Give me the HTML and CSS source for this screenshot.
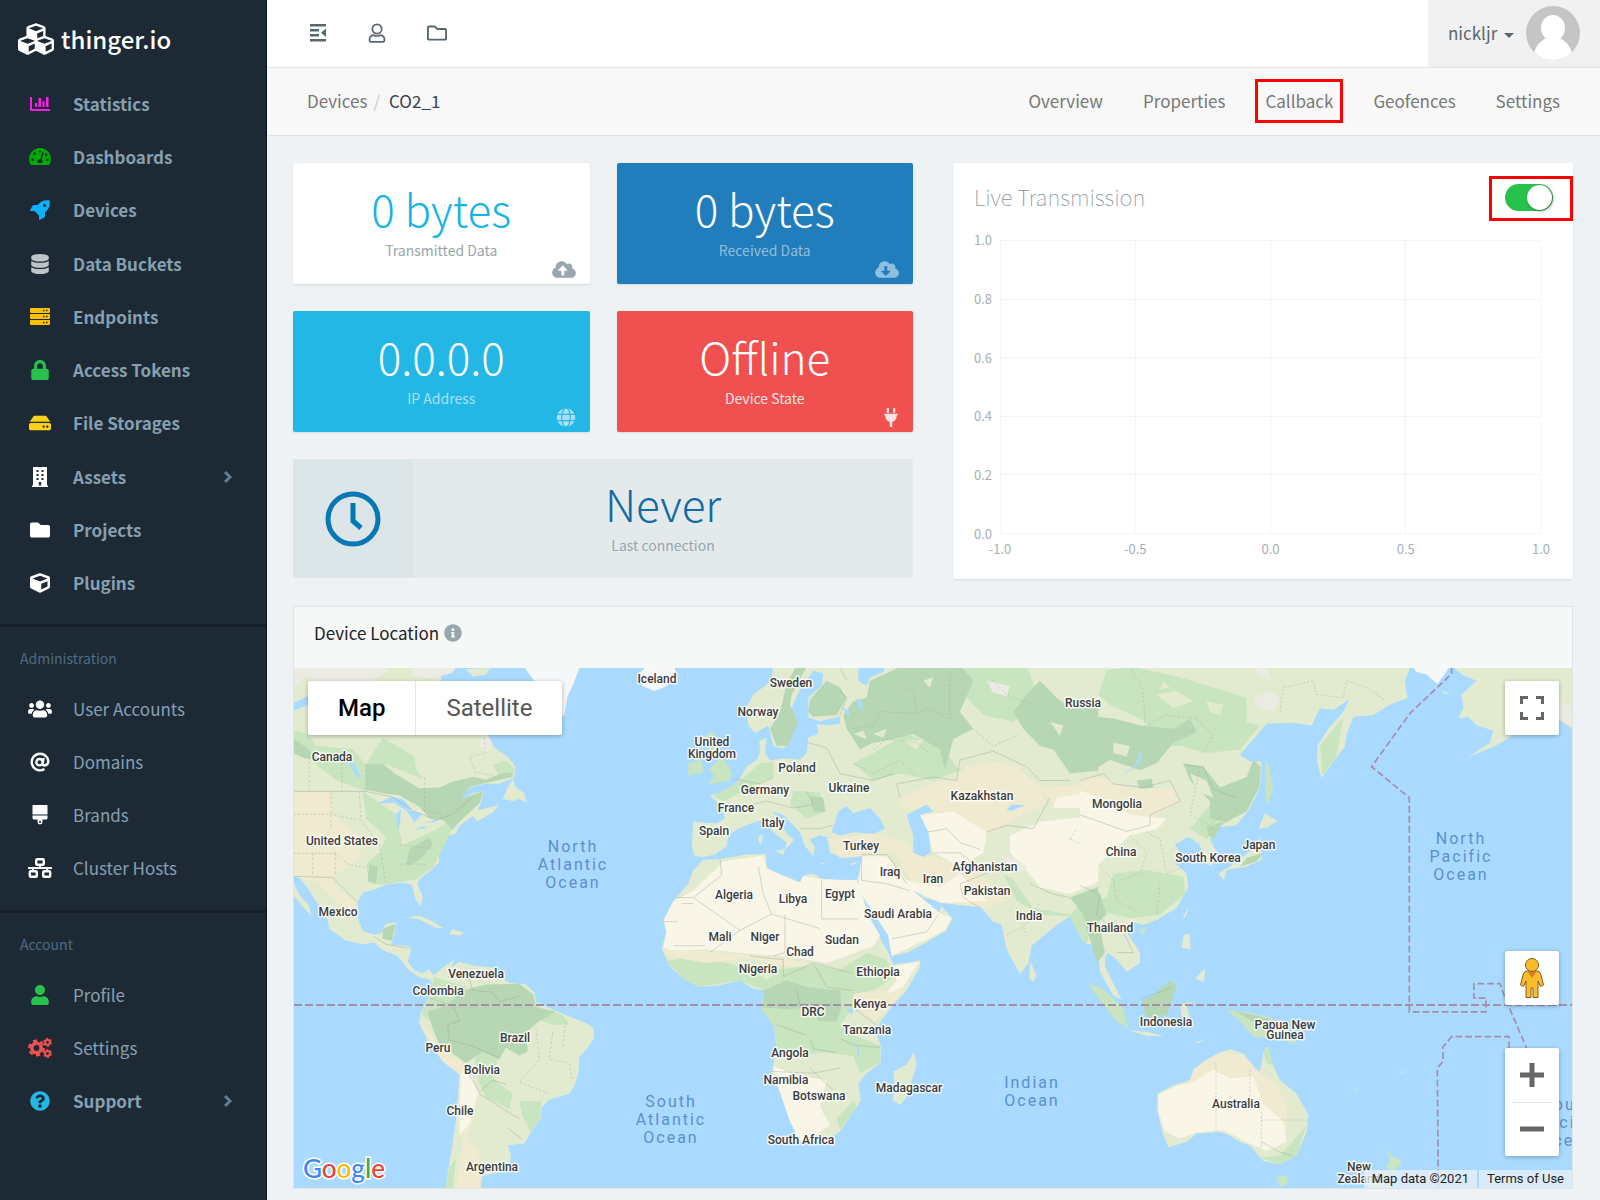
FILE: index.html
```html
<!DOCTYPE html>
<html lang="en">
<head>
    <meta charset="UTF-8">
    <meta name="viewport" content="width=device-width, initial-scale=1.0">
    <title>thinger.io - CO2_1</title>
    <link rel="stylesheet" href="styles.css">
</head>
<body>
    <div class="app">
        <aside class="sidebar">
            <a class="brand" href="#">
                <svg class="brand-icon" viewBox="0 0 512 512"><path d="M488.6 250.2L392 214V105.5c0-15-9.3-28.4-23.4-33.7l-100-37.5c-8.1-3.1-17.1-3.1-25.3 0l-100 37.5c-14.1 5.3-23.4 18.7-23.4 33.7V214l-96.6 36.2C9.3 255.5 0 268.9 0 283.9V394c0 13.6 7.7 26.1 19.9 32.2l100 50c10.1 5.1 22.1 5.1 32.2 0l103.9-52 103.9 52c10.1 5.1 22.1 5.1 32.2 0l100-50c12.2-6.1 19.9-18.6 19.9-32.2V283.9c0-15-9.3-28.4-23.4-33.7zM358 214.8l-85 31.9v-68.2l85-37v73.3zM154 104.1l102-38.2 102 38.2v.6l-102 41.4-102-41.4v-.6zm84 291.1l-85 42.5v-79.1l85-38.8v75.4zm0-112l-102 41.4-102-41.4v-.6l102-38.2 102 38.2v.6zm240 112l-85 42.5v-79.1l85-38.8v75.4zm0-112l-102 41.4-102-41.4v-.6l102-38.2 102 38.2v.6z"/></svg>
                <span>thinger.io</span>
            </a>

            <nav class="menu menu-main">
                <a class="strong" href="#">
                    <svg class="icon magenta" viewBox="0 0 20 20"><path d="M0 3h2v12h18v2H1.5Q0 17 0 15.5zM5 9h2v4H5zM8.5 4h2.5v9H8.500zM12.500 7h2v6h-2zM16 3h2.5v10H16z"/></svg>
                    Statistics
                </a>
                <a class="strong" href="#">
                    <svg class="icon wide green-dark" viewBox="0 0 22 20"><path fill-rule="evenodd" d="M11 1a11 11 0 0 0-9.5 16.5q.5.5 1.200.5h16.600q.7 0 1.200-.5A11 11 0 0 0 11 1zM11 3.200a1.200 1.200 0 1 1 0 2.400 1.200 1.200 0 0 1 0-2.400zM5.500 5.500a1.200 1.200 0 1 1 0 2.400 1.200 1.200 0 0 1 0-2.400zM3.600 11.500a1.200 1.200 0 1 1 0 2.400 1.200 1.200 0 0 1 0-2.400zM18.400 11.500a1.200 1.200 0 1 1 0 2.400 1.200 1.200 0 0 1 0-2.400zM17.200 6.500a1.200 1.200 0 1 1 0 2.400 1.200 1.200 0 0 1 0-2.400zM13.600 5l1.300.4-2.200 7.100a2.500 2.500 0 0 1 .3 3.500H9a2.500 2.500 0 0 1 2.400-4z"/></svg>
                    Dashboards
                </a>
                <a class="strong" href="#">
                    <svg class="icon blue" viewBox="0 0 20 20"><path fill-rule="evenodd" d="M19.600.5C14.500-.6 10.700 1.400 7.600 5H4Q3 5 2.500 5.800L.2 10q-.4 1 .8 1h3.500L9 15.500V19q.1 1.200 1 .7l4.200-2.200q.8-.5.8-1.500v-3.600c3.600-3.100 5.600-6.900 4.600-11.900zM14.600 3.800a1.600 1.600 0 1 1 0 3.200 1.600 1.600 0 0 1 0-3.200z"/></svg>
                    Devices
                </a>
                <a class="strong" href="#">
                    <svg class="icon silver" viewBox="0 0 448 512"><path d="M448 73.143v45.714C448 159.143 347.667 192 224 192S0 159.143 0 118.857V73.143C0 32.857 100.333 0 224 0s224 32.857 224 73.143zM448 176v102.857C448 319.143 347.667 352 224 352S0 319.143 0 278.857V176c48.125 33.143 136.208 48.572 224 48.572S399.874 209.143 448 176zm0 160v102.857C448 479.143 347.667 512 224 512S0 479.143 0 438.857V336c48.125 33.143 136.208 48.572 224 48.572S399.874 369.143 448 336z"/></svg>
                    Data Buckets
                </a>
                <a class="strong" href="#">
                    <svg class="icon amber" viewBox="0 0 20 20"><rect y="1" width="20" height="5" rx="1"/><rect y="7" width="20" height="5" rx="1"/><rect y="13" width="20" height="5" rx="1"/><path stroke="#1d2a35" stroke-width="1.5" stroke-dasharray="1.500 1.500" d="M13 3.500h5M13 9.500h5M13 15.500h5"/></svg>
                    Endpoints
                </a>
                <a class="strong" href="#">
                    <svg class="icon green" viewBox="0 0 448 512"><path d="M400 224h-24v-72C376 68.200 307.800 0 224 0S72 68.200 72 152v72H48c-26.500 0-48 21.500-48 48v192c0 26.500 21.500 48 48 48h352c26.500 0 48-21.500 48-48V272c0-26.500-21.500-48-48-48zm-104 0H152v-72c0-39.700 32.300-72 72-72s72 32.300 72 72v72z"/></svg>
                    Access Tokens
                </a>
                <a class="strong" href="#">
                    <svg class="icon wide yellow" viewBox="0 0 576 512"><path d="M576 304v96c0 26.510-21.490 48-48 48H48c-26.510 0-48-21.490-48-48v-96c0-26.510 21.490-48 48-48h480c26.510 0 48 21.490 48 48zm-48-80a79.557 79.557 0 0 1 30.777 6.165L462.250 85.374A48.003 48.003 0 0 0 422.311 64H153.689a48 48 0 0 0-39.938 21.374L17.223 230.165A79.557 79.557 0 0 1 48 224h480z"/><g fill="#1d2a35"><circle cx="384" cy="352" r="30"/><circle cx="480" cy="352" r="30"/></g></svg>
                    File Storages
                </a>
                <a class="strong" href="#">
                    <svg class="icon white" viewBox="0 0 18 20"><path fill-rule="evenodd" d="M2 0h14v18.500h1V20H1v-1.500h1zM5.500 3v2h2V3zm5 0v2h2V3zm-5 4v2h2V7zm5 0v2h2V7zm-5 4v2h2v-2zm5 0v2h2v-2zM7.800 15v3.500h2.400V15z"/></svg>
                    Assets
                    <svg class="arrow" viewBox="0 0 10 14"><path d="M2 2l5 5-5 5"/></svg>
                </a>
                <a class="strong" href="#">
                    <svg class="icon white" viewBox="0 0 512 512"><path d="M464 128H272l-64-64H48C21.490 64 0 85.490 0 112v288c0 26.510 21.490 48 48 48h416c26.510 0 48-21.490 48-48V176c0-26.510-21.490-48-48-48z"/></svg>
                    Projects
                </a>
                <a class="strong" href="#">
                    <svg class="icon white" viewBox="0 0 512 512"><path d="M239.100 6.300l-208 78c-18.700 7-31.100 25-31.100 45v225.100c0 18.200 10.300 34.800 26.500 42.900l208 104c13.500 6.800 29.400 6.800 42.900 0l208-104c16.300-8.100 26.500-24.800 26.500-42.900V129.300c0-20-12.400-37.900-31.100-44.900l-208-78C262 2.200 250 2.200 239.100 6.300zM256 68.400l192 72v1.100l-192 78-192-78v-1.100l192-72zm32 356V275.500l160-65v133.900l-160 80z"/></svg>
                    Plugins
                </a>
            </nav>

            <h2 class="menu-title">Administration</h2>
            <nav class="menu menu-admin">
                <a href="#">
                    <svg class="icon wider white" viewBox="0 0 640 512"><path d="M96 224c35.300 0 64-28.700 64-64s-28.700-64-64-64-64 28.700-64 64 28.700 64 64 64zm448 0c35.300 0 64-28.700 64-64s-28.700-64-64-64-64 28.700-64 64 28.700 64 64 64zm32 32h-64c-17.600 0-33.500 7.100-45.100 18.600 40.300 22.100 68.900 62 75.100 109.400h66c17.700 0 32-14.300 32-32v-32c0-35.300-28.700-64-64-64zm-256 0c61.900 0 112-50.100 112-112S381.900 32 320 32 208 82.100 208 144s50.100 112 112 112zm76.800 32h-8.300c-20.800 10-43.900 16-68.500 16s-47.600-6-68.500-16h-8.300C179.600 288 128 339.600 128 403.200V432c0 26.500 21.500 48 48 48h288c26.500 0 48-21.500 48-48v-28.800c0-63.600-51.600-115.200-115.200-115.200zm-223.700-13.400C161.500 263.100 145.600 256 128 256H64c-35.300 0-64 28.700-64 64v32c0 17.700 14.300 32 32 32h65.900c6.300-47.400 34.900-87.300 75.200-109.400z"/></svg>
                    User Accounts
                </a>
                <a href="#">
                    <svg class="icon white" viewBox="0 0 20 20"><g fill="none" stroke="#fff" stroke-width="2.400"><circle cx="9.500" cy="10.200" r="3.200"/><path d="M13.600 6l-.9 5.500q-.2 2 1.700 2 3.900-.4 3.900-4.500A8.300 7.900 0 0 0 10 1.700 8.300 8.300 0 1 0 14.500 17"/></g></svg>
                    Domains
                </a>
                <a href="#">
                    <svg class="icon white" viewBox="0 0 18 20"><path fill-rule="evenodd" d="M1.500 0h15v9.500h-15zM1.500 10.500h15V13q0 1.500-1.500 1.500h-3.500V17a2.500 2.500 0 0 1-5 0v-2.500H3q-1.500 0-1.500-1.500zM9 16a1 1 0 1 0 .1 0z"/></svg>
                    Brands
                </a>
                <a href="#">
                    <svg class="icon wider white" viewBox="0 0 24 20"><path d="M0 9h24v2H0zM11 7h2v4h-2zM4 10h2v4H4zM18 10h2v4h-2z"/><g fill="none" stroke="#fff" stroke-width="2.400"><rect x="8.200" y="1.200" width="7.600" height="5.600" rx="1"/><rect x="1.800" y="13.200" width="7" height="5.600" rx="1"/><rect x="15.200" y="13.200" width="7" height="5.600" rx="1"/></g></svg>
                    Cluster Hosts
                </a>
            </nav>

            <h2 class="menu-title">Account</h2>
            <nav class="menu menu-account">
                <a href="#">
                    <svg class="icon green" viewBox="0 0 448 512"><path d="M224 256c70.700 0 128-57.300 128-128S294.700 0 224 0 96 57.300 96 128s57.300 128 128 128zm89.600 32h-16.700c-22.200 10.200-46.900 16-72.900 16s-50.600-5.800-72.900-16h-16.700C60.200 288 0 348.200 0 422.400V464c0 26.500 21.500 48 48 48h352c26.500 0 48-21.500 48-48v-41.600c0-74.200-60.200-134.400-134.400-134.400z"/></svg>
                    Profile
                </a>
                <a href="#">
                    <svg class="icon wider" viewBox="0 0 24 20"><g fill="none" stroke="#f05050"><circle cx="8.500" cy="10" r="4.700" stroke-width="3.500"/><circle cx="8.500" cy="10" r="7.200" stroke-width="2.600" stroke-dasharray="4.200 3.340"/><circle cx="19.500" cy="4.300" r="2.400" stroke-width="2"/><circle cx="19.500" cy="4.300" r="3.700" stroke-width="1.400" stroke-dasharray="2.200 1.670"/><circle cx="19.500" cy="15.500" r="2.400" stroke-width="2"/><circle cx="19.500" cy="15.500" r="3.700" stroke-width="1.400" stroke-dasharray="2.200 1.670"/></g></svg>
                    Settings
                </a>
                <a class="strong" href="#">
                    <svg class="icon cyan" viewBox="0 0 512 512"><path d="M504 256c0 136.997-111.043 248-248 248S8 392.997 8 256C8 119.083 119.043 8 256 8s248 111.083 248 248zM262.655 90c-54.497 0-89.255 22.957-116.549 63.758-3.536 5.286-2.353 12.415 2.715 16.258l34.699 26.310c5.205 3.947 12.621 3.008 16.665-2.122 17.864-22.658 30.113-35.797 57.303-35.797 20.429 0 45.698 13.148 45.698 32.958 0 14.976-12.363 22.667-32.534 33.976C247.128 238.528 216 254.941 216 296v4c0 6.627 5.373 12 12 12h56c6.627 0 12-5.373 12-12v-1.333c0-28.462 83.186-29.647 83.186-106.667 0-58.002-60.165-102-116.531-102zM256 338c-25.365 0-46 20.635-46 46 0 25.364 20.635 46 46 46s46-20.636 46-46c0-25.365-20.635-46-46-46z"/></svg>
                    Support
                    <svg class="arrow" viewBox="0 0 10 14"><path d="M2 2l5 5-5 5"/></svg>
                </a>
            </nav>
        </aside>

        <div class="page">
            <header class="topbar">
                <div class="tools">
                    <button type="button" aria-label="Toggle menu">
                        <svg width="18" height="18" viewBox="0 0 18 18"><path d="M1 0h16v2.500H1zM1 5h9v2.500H1zM1 10h9v2.500H1zM1 15h16v2.500H1zM17 4.500v8.500l-5-4.200z"/></svg>
                    </button>
                    <button type="button" aria-label="Account">
                        <svg width="22" height="20" viewBox="-2 0 22 20"><g fill="none" stroke="#58666e" stroke-width="1.700"><circle cx="9" cy="6" r="4.700"/><path d="M5.500 12.200q3.500 1.600 7 0 4 .6 4 4.500 0 2.200-1.500 2.200H3q-1.500 0-1.500-2.200 0-3.900 4-4.500z"/></g></svg>
                    </button>
                    <button type="button" aria-label="Projects">
                        <svg width="20" height="20" viewBox="0 0 512 512"><path d="M464 128H272l-54.630-54.630c-6-6-14.140-9.370-22.630-9.370H48C21.490 64 0 85.490 0 112v288c0 26.510 21.490 48 48 48h416c26.510 0 48-21.490 48-48V176c0-26.510-21.490-48-48-48zm0 272H48V112h140.120l54.630 54.630c6 6 14.140 9.370 22.630 9.370H464v224z"/></svg>
                    </button>
                </div>
                <button class="user" type="button">
                    nickljr <span class="caret"></span>
                    <svg class="avatar" viewBox="0 0 54 54"><clipPath id="round"><circle cx="27" cy="27" r="27"/></clipPath><g clip-path="url(#round)"><path fill="#c5c5c5" d="M0 0h54v54H0z"/><ellipse cx="27" cy="22" rx="12" ry="13" fill="#fff"/><path fill="#fff" d="M8 47q3-11 12.500-15h13Q43 36 46 47v8H8z"/></g></svg>
                </button>
            </header>

            <div class="subbar">
                <div class="crumbs"><a href="#">Devices</a><span class="slash">/</span><span class="current">CO2_1</span></div>
                <nav class="tabs">
                    <a href="#">Overview</a>
                    <a href="#">Properties</a>
                    <a class="marked" href="#">Callback</a>
                    <a href="#">Geofences</a>
                    <a href="#">Settings</a>
                </nav>
            </div>

            <main class="content">
                <div class="columns">
                    <div class="widgets">
                        <div class="widget">
                            <div class="value cyan-text">0 bytes</div>
                            <div class="caption">Transmitted Data</div>
                            <svg class="corner" viewBox="0 0 640 512"><path d="M537.600 226.600c4.100-10.700 6.400-22.400 6.400-34.600 0-53-43-96-96-96-19.700 0-38.100 6-53.300 16.200C367 64.200 315.300 32 256 32c-88.400 0-160 71.600-160 160 0 2.700.1 5.400.2 8.100C40.200 219.800 0 273.200 0 336c0 79.500 64.500 144 144 144h368c70.700 0 128-57.300 128-128 0-61.900-44-113.600-102.400-125.400zM393.400 288H328v112c0 8.800-7.200 16-16 16h-48c-8.800 0-16-7.200-16-16V288h-65.400c-14.300 0-21.400-17.200-11.300-27.300l105.400-105.400c6.200-6.200 16.400-6.200 22.600 0l105.400 105.400c10.100 10.100 2.900 27.300-11.300 27.300z"/></svg>
                        </div>
                        <div class="widget received">
                            <div class="value">0 bytes</div>
                            <div class="caption">Received Data</div>
                            <svg class="corner" viewBox="0 0 640 512"><path d="M537.600 226.600c4.100-10.700 6.400-22.400 6.400-34.600 0-53-43-96-96-96-19.700 0-38.100 6-53.300 16.200C367 64.200 315.300 32 256 32c-88.400 0-160 71.600-160 160 0 2.700.1 5.400.2 8.100C40.200 219.800 0 273.200 0 336c0 79.500 64.500 144 144 144h368c70.700 0 128-57.300 128-128 0-61.900-44-113.600-102.400-125.400zm-132.900 88.700L299.300 420.700c-6.200 6.200-16.400 6.200-22.600 0L171.300 315.300c-10.100-10.100-2.900-27.300 11.300-27.300H248V176c0-8.800 7.200-16 16-16h48c8.800 0 16 7.200 16 16v112h65.400c14.200 0 21.400 17.200 11.300 27.300z"/></svg>
                        </div>
                        <div class="widget address">
                            <div class="value">0.0.0.0</div>
                            <div class="caption">IP Address</div>
                            <svg class="corner narrow" viewBox="0 0 20 20"><circle cx="10" cy="10" r="9.800"/><g fill="none" stroke="#23b7e5" stroke-width="1.200"><ellipse cx="10" cy="10" rx="4.500" ry="10"/><path d="M0 6.700h20M0 13.300h20"/></g></svg>
                        </div>
                        <div class="widget state">
                            <div class="value">Offline</div>
                            <div class="caption">Device State</div>
                            <svg class="corner slim" viewBox="0 0 16 20"><path d="M3.500 1a1.200 1.200 0 0 1 2.400 0v4H3.500zM10.100 1a1.200 1.200 0 0 1 2.400 0v4h-2.400zM1 6h14v2h-1q0 5.500-4.700 6.700V20H6.700v-5.300Q2 13.500 2 8H1z"/></svg>
                        </div>
                        <div class="widget last">
                            <div class="clock">
                                <svg viewBox="0 0 56 56"><circle cx="28" cy="28" r="25"/><path d="M28 12v18l8 7"/></svg>
                            </div>
                            <div class="last-text">
                                <div class="value">Never</div>
                                <div class="caption">Last connection</div>
                            </div>
                        </div>
                    </div>

                    <section class="live">
                        <div class="live-head">
                            <h3 id="live-title">Live Transmission</h3>
                            <label class="switch"><input type="checkbox" checked aria-labelledby="live-title"></label>
                        </div>
                        <div class="chart">
                            <div class="y-axis">
                                <span>1.0</span><span>0.8</span><span>0.6</span><span>0.4</span><span>0.2</span><span>0.0</span>
                            </div>
                            <div class="plot">
                                <i></i><i></i><i></i><i></i>
                                <i></i><i></i><i></i><i></i>
                                <i></i><i></i><i></i><i></i>
                                <i></i><i></i><i></i><i></i>
                                <i></i><i></i><i></i><i></i>
                            </div>
                            <div class="x-axis">
                                <span>-1.0</span><span>-0.5</span><span>0.0</span><span>0.5</span><span>1.0</span>
                            </div>
                        </div>
                    </section>
                </div>

                <section class="location">
                    <h3>Device Location
                        <svg class="info" viewBox="0 0 512 512"><path d="M256 8C119.043 8 8 119.083 8 256c0 136.997 111.043 248 248 248s248-111.003 248-248C504 119.083 392.957 8 256 8zm0 110c23.196 0 42 18.804 42 42s-18.804 42-42 42-42-18.804-42-42 18.804-42 42-42zm56 254c0 6.627-5.373 12-12 12h-88c-6.627 0-12-5.373-12-12v-24c0-6.627 5.373-12 12-12h12v-64h-12c-6.627 0-12-5.373-12-12v-24c0-6.627 5.373-12 12-12h64c6.627 0 12 5.373 12 12v100h12c6.627 0 12 5.373 12 12v24z"/></svg>
                    </h3>
                    <div class="map">
                        <svg class="world" viewBox="0 0 1278 520" preserveAspectRatio="xMidYMid slice">
                            <!-- Americas -->
                            <g transform="translate(-8 -68) scale(.3333 .3827)">
                                <path class="land" d="M10 160H470L450 352 445 385 420 405 425 440 415 465 390 440 385 405 300 375 270 352 450 352H605L625 385 665 410 688 435 685 465 640 480 600 480 550 490 520 525 560 505 592 500 585 530 575 550 640 535 620 555 575 578 560 565 520 590 510 610 475 620 470 650 458 660 460 685 430 710 400 730 395 745 410 775 405 800 390 785 378 745 350 738 300 745 270 755 230 765 215 790 215 830 230 865 265 875 285 870 300 845 332 842 325 875 315 900 370 905 375 915 365 945 385 968 410 975 430 965 445 985 435 992 400 985 370 968 335 930 290 915 265 895 230 900 180 890 130 860 125 835 100 800 70 760 40 725 10 720z"/>
                                <path class="land" d="M20 732L40 770 70 800 75 825 50 800 20 770zM650 520L665 490 680 468 690 490 715 505 722 530 700 520 680 525zM365 828L400 825 440 840 472 857 450 857 400 835zM490 872L500 860 535 870 520 877zM540 180L560 200 600 195 612 178z"/>
                                <path class="pale" d="M10 160H310L300 190 250 212H100L60 200 10 240zM370 160H520L500 190 440 205 380 200zM590 352H605L620 380 600 400 580 380z"/>
                                <path class="ice" d="M710 170L735 200 760 230 800 330 835 300 845 250 860 225 880 178 900 170zM1055 195L1085 172 1165 172 1172 205 1135 228 1105 238 1070 225z"/>
                                <path class="green" d="M20 340L66 350 90 380 200 390 240 430 240 500 150 470 60 410 20 400zM230 500L330 560 350 640 450 600 520 560 470 650 440 700 390 730 330 738 300 745 250 740 240 690 280 660 300 620 240 570zM290 360L340 385 385 410 390 440 410 468 360 450 300 430 240 430zM620 430L660 420 685 440 680 465 640 460z"/>
                                <path class="forest" d="M240 430L290 428 330 455 400 492 460 490 500 475 560 462 600 470 640 455 680 450 680 462 600 478 550 488 525 520 590 500 582 530 520 580 500 600 470 575 430 570 400 540 340 510 290 505 240 495zM20 360L60 385 90 410 60 415 20 400zM250 690L275 695 270 740 245 735zM370 650L430 620 440 640 400 680 360 695zM290 860L330 845 318 890 290 885z"/>
                                <path class="tan" d="M20 502H135L140 560 220 620 225 670 150 720 140 745 210 790 210 810 150 790 100 740 20 720z"/>
                                <path class="water" d="M20 270L66 250V275L20 290zM275 532L315 515 350 520 378 548 350 545 325 530zM330 560L345 548 342 585 335 602zM352 545L408 560 385 582 370 560zM380 602L415 590 420 596zM420 582L455 572 450 580zM178 412L195 415 225 460 215 465z"/>
                                <path class="land" d="M430 988L450 975 470 960 505 940 495 960 520 945 560 955 620 960 640 985 670 1000 720 1005 745 1025 750 1050 800 1070 840 1085 900 1105 922 1118 925 1145 900 1175 880 1195 878 1235 865 1270 850 1290 790 1305 768 1325 765 1355 735 1390 715 1420 665 1425 675 1450 672 1470 640 1495 590 1505 580 1545H478L488 1480 500 1420 515 1330 520 1240 470 1205 430 1160 400 1105 405 1075 430 1035 442 1010z"/>
                                <path class="green" d="M445 985L500 1000 540 1010 520 1060 430 1100 405 1080 430 1035zM560 1170L640 1180 620 1250 680 1290 670 1330 600 1300 580 1260zM750 1060L830 1085 850 1110 800 1110 740 1090zM700 1310L765 1310 768 1350 735 1390 710 1350zM490 1480L510 1460 500 1540H480z"/>
                                <path class="forest" d="M425 1075L480 1060 530 1020 600 1005 700 1003 742 1030 750 1065 810 1075 760 1100 720 1130 725 1180 700 1190 660 1170 640 1200 590 1180 540 1210 500 1185 460 1160 440 1120z"/>
                                <path class="tan" d="M402 1105L440 1140 470 1185 530 1205 545 1260 580 1280 560 1360 545 1400 580 1450 585 1540H510L530 1420 515 1340 522 1240 470 1205z"/>
                                <path class="sand" d="M525 1235L560 1245 575 1290 550 1370 520 1400z"/>
                                <path class="border" d="M25 500H240L320 515 380 550 450 575 500 560 560 515M25 722L140 725 215 790M265 880L300 900 370 910M430 1040L500 1060 520 1100 485 1110 490 1150 560 1165 635 1195M530 1210L580 1285 620 1255 660 1265M580 1290L670 1340 700 1355M665 1380L710 1410M540 960L560 1020 620 1025 640 1050 700 1035"/>
                                <path class="border dots" d="M70 410V500M168 400V500M240 430V500M416 465V550L470 560M135 502V600M25 560H135L220 575M25 662H150L185 690 240 700M80 662V722M148 662V722M220 502L225 575 280 640 300 740M340 640L440 650M330 690H420M595 360L600 400 550 410 570 450 620 460M750 1120L760 1200 700 1260 790 1290M800 1130L790 1200 850 1210 860 1260M840 1100L830 1170"/>
                            </g>
                            <!-- Europe, Africa and western Asia -->
                            <g transform="translate(346 -8) scale(.3333 .3443)">
                                <path class="land" d="M1385 10H400L395 60 340 100 320 135 325 190 345 213 385 190 400 250 430 258 450 230 475 180 455 140 475 95 520 30 550 40 545 75 505 110 505 168 540 178 600 165 600 185 560 190 530 185 535 215 505 225 500 270 480 290 430 285 390 292 375 270 380 225 358 235 360 270 350 290 320 310 300 345 280 365 250 385 208 392 240 420 255 460 230 475 160 470 155 540 165 570 190 572 225 565 260 540 265 510 295 490 345 470 370 465 400 500 440 530 435 552 462 522 440 505 420 470 400 440 430 450 480 500 495 540 520 570 525 545 510 520 540 510 562 515 570 560 610 575 665 570 660 610 650 640 650 670 690 720 745 800 755 860 800 850 860 820 920 785 938 750 905 715 895 735 850 720 815 670 810 655 850 690 905 705 1020 715 1060 760 1085 770 1100 840 1140 912 1165 880 1175 830 1250 770 1290 745 1330 820 1385 830z"/>
                                <path class="land" d="M190 580L240 578 320 565 378 563 380 605 430 625 480 645 490 625 520 620 545 635 600 640 650 638 655 665 670 700 690 750 710 790 745 850 760 885 842 873 838 895 800 960 760 1000 730 1040 705 1075 722 1120 722 1170 680 1200 655 1230 662 1280 635 1320 600 1370 560 1395 500 1400 478 1398 450 1340 425 1270 395 1200 410 1120 400 1060 365 1015 372 960 340 955 300 930 240 945 175 950 130 925 90 890 65 840 78 790 70 755 100 700 145 650 160 610z"/>
                                <path class="land" d="M822 1140L830 1175 800 1270 780 1292 758 1280 765 1240 760 1195 800 1175zM355 510L368 508 365 535 356 530zM405 555L437 550 430 566zM535 588L555 590 545 593zM630 592L652 585 640 597zM1170 875L1190 915 1180 935 1168 925z"/>
                                <path class="green" d="M190 225L220 205 225 240 265 310 278 330 265 352 205 360 225 335 205 320 235 290 200 250zM145 300L185 290 190 325 145 337zM300 350L360 300 400 295 400 340 330 370 250 410 220 395zM460 380L540 385 560 440 500 460 450 420zM700 270L800 215 900 250 960 320 880 350 780 330 700 350 640 300zM960 15H1160L1200 120 1120 180 1030 160 980 110z"/>
                                <path class="forest" d="M470 15L500 20 455 100 450 130 475 180 445 248 410 250 390 200 420 150 440 70zM560 60L600 80 620 110 590 160 520 165 505 150 510 115zM690 60L760 30 790 15H960L1000 60 960 150 1000 200 940 230 915 320 900 260 820 215 760 230 700 240 660 260 620 200 610 160 640 120 680 110zM1160 100L1200 60 1250 110 1290 140 1385 130V320L1290 330 1240 260 1200 250 1150 200 1120 150zM510 395L550 400 555 440 520 440z"/>
                                <path class="land" d="M850 60L880 50 870 80zM1010 190L1090 170 1120 210 1060 230zM700 215L740 200 730 225zM1230 180L1270 190 1260 220zM640 215L670 205 680 230zM790 235L850 230 830 260zM1180 290L1220 300 1200 320z"/>
                                <path class="tan" d="M560 520L700 505 800 530 820 560 880 570 1020 620 1100 700 1040 720 900 705 820 650 760 560 600 575zM780 400L870 360 950 340 980 310 1060 295 1130 310 1200 370 1220 420 1150 450 1060 500 1000 500 940 440 880 440 800 430 785 440zM1200 370L1385 360V440L1240 420z"/>
                                <path class="sand" d="M250 585L370 568 380 605 430 628 480 648 490 627 545 637 650 640 690 750 720 800 700 830 620 860 560 880 500 870 420 860 300 850 190 840 100 845 70 835 80 790 72 755 100 700 160 670zM665 570L740 570 800 640 900 660 960 620 1040 700 905 705 820 670 900 735 935 750 915 785 755 860 745 800 655 665zM840 450L940 440 1040 500 1030 560 960 600 880 560 865 500zM1110 510L1200 470 1385 450V640L1290 680 1200 660 1150 600 1110 560zM1250 400L1385 380V430H1240z"/>
                                <path class="green" d="M80 875L150 860 260 880 340 900 380 930 420 900 520 885 600 900 680 850 740 870 760 920 700 960 640 970 640 1010 600 1060 640 1090 720 1120 720 1170 660 1200 640 1150 560 1140 400 1150 410 1110 400 1060 365 1015 372 960 300 930 175 950 130 925zM590 1330L640 1280 650 1300 600 1365zM1090 620L1120 640 1180 720 1290 740 1385 650V820H1330L1290 745 1200 740 1130 700z"/>
                                <path class="forest" d="M370 960L440 930 500 950 600 960 605 1010 590 1050 540 1050 490 1010 440 1015 400 1010 370 1010zM1290 690L1385 655V780L1330 740z"/>
                                <path class="tan" d="M70 842L190 845 300 855 420 865 520 885 440 890 330 865 200 880 90 862zM640 970L720 960 790 960 740 1020 700 1050 650 1010z"/>
                                <path class="sand" d="M760 890L838 877 790 950 740 970 770 930zM400 1180L480 1210 560 1220 540 1300 570 1350 500 1398 478 1395 450 1340 425 1270z"/>
                                <path class="pale" d="M1040 60L1110 75 1100 105 1060 95zM1080 565L1120 575 1160 600 1150 620 1100 590z"/>
                                <path class="water" d="M575 500L595 440 620 425 640 445 690 430 720 460 735 490 700 505 640 500 600 510zM800 450L860 420 880 440 840 450 865 500 872 560 850 572 820 560 820 510zM655 10V60L680 75 690 50 730 35 740 10zM650 110L665 120 670 150 655 135zM605 135L630 150 625 165zM1100 435L1115 420 1155 422 1115 438zM620 1015L640 1012 636 1030zM648 1110L658 1130 655 1160z"/>
                                <path class="border" d="M240 578L245 625 160 690 300 785 395 738 370 680 355 600M395 738L540 780M545 640V752H655M300 785L210 850M435 740V850L400 860M160 690H110M125 707H160M70 760H112M100 830H195M330 860L430 870 430 920 520 880 640 910M520 880L560 950 640 960M470 960L480 1000 420 1005M410 1060L500 1090M510 1100L520 1130 590 1140M395 1195L520 1200 600 1185M510 1185L580 1250M640 1010L710 1060M600 1100L650 1120 720 1125M665 570V640L740 650 810 670M755 810L860 790 895 740M665 565L740 565 760 590 800 650M860 500L920 490 960 530 1020 550M880 560L960 560 1040 620 960 650 970 690 1020 720M280 345L360 360 400 340M340 420L380 410 460 430 520 420 500 380M480 490L540 490 580 480M505 240L560 255 600 330 700 350 760 330M780 400L770 360 880 340 950 350 960 290 1060 265 1160 310 1200 350 1290 350M1040 500L1100 480 1180 490 1230 400M1170 650L1240 680 1290 690M600 90L620 110 600 160M620 60L600 20"/>
                                <path class="border dots" d="M640 200L700 190 720 150 830 155 820 90 780 70M830 155L860 140 930 170V30M700 260L740 230 830 240 880 280M640 300L700 330 780 290 830 340M1000 200L1060 250 1130 220M1060 60L1100 100 1180 130M1290 520L1380 560M1290 520L1310 490M1100 800L1170 760 1200 700M1130 720L1160 800"/>
                            </g>
                            <!-- Eastern Asia and Oceania -->
                            <g transform="translate(786 -8) scale(.3333 .3443)">
                                <path class="land" d="M55 10H995L975 60 982 110 930 130 880 160 820 165 800 215 795 250 765 290 725 342 712 300 712 250 745 200 790 150 808 115 760 145 720 140 695 190 640 182 560 185 520 230 480 275 510 295 545 295 540 370 510 430 470 480 420 485 390 520 410 560 395 598 375 590 370 555 355 535 330 515 285 535 300 560 285 590 320 620 325 660 290 720 230 755 190 770 155 760 140 790 180 850 180 880 140 905 110 870 85 850 75 860 75 890 100 940 125 985 100 975 60 905 55 850 30 825 20 825 55 700z"/>
                                <path class="land" d="M1105 10L1150 45 1190 60 1145 100 1150 140 1135 170 1165 165 1190 190 1240 205 1230 240 1165 282 1245 250 1290 225 1330 180 1400 150 1485 205V10zM535 490L555 445 592 468 560 487zM540 510L545 580 500 600 440 610 432 640 415 620 450 600 490 570 530 540zM308 748L325 718 318 745zM310 800L328 795 332 840 305 835zM345 925L375 895 372 935zM145 1075L200 1080 252 1092 200 1092zM300 1000L345 992 320 1005 330 1040 305 1035zM345 1110L380 1100 350 1114zM810 1238L838 1252 830 1250zM960 1203L985 1188 970 1200zM1085 90L1110 97 1095 99z"/>
                                <path class="ice" d="M990 10L1010 35 1040 42 1072 70 1095 40 1115 10z"/>
                                <path class="green" d="M555 295L568 310 580 375 560 422 556 370zM175 785L200 778 188 798zM25 940L60 950 130 1010 145 1070 110 1050 50 975zM440 1015L480 1020 560 1035 610 1060 652 1117 600 1100 520 1095 480 1050zM80 30L160 20 300 50 400 80 500 110 500 180 540 190 480 260 380 270 300 250 210 250 200 180 90 130 55 100zM720 250L790 165 770 280 728 335zM100 620L200 610 310 630 315 680 240 740 150 750 60 730 30 700 80 690zM330 490L390 420 480 400 500 430 420 485 380 520zM590 1500L625 1497 620 1525 600 1530zM915 1418L935 1440 968 1458 940 1487 920 1475 930 1450zM920 1480L930 1490 900 1540H860z"/>
                                <path class="forest" d="M0 160L100 170 180 190 280 200 330 170 350 210 280 240 230 300 180 320 90 290 40 320 0 300zM170 350L215 345 220 370 180 378zM310 300L370 310 420 370 500 340 520 290 542 310 538 370 500 440 440 470 390 460 390 410 330 350zM380 485L430 470 400 520 385 510zM185 990L220 975 270 930 290 945 262 1030 200 1038zM0 690L60 680 80 740 55 760 75 850 50 880 20 780zM550 560L530 585 480 600 500 575zM460 1018L560 1040 600 1065 540 1060z"/>
                                <path class="land" d="M230 100L290 90 340 120 280 140zM100 240L150 250 140 280 100 270zM250 60L270 80 240 85zM380 120L430 130 420 160 390 150zM330 330L380 350 400 400 350 380z"/>
                                <path class="tan" d="M0 345L70 340 150 375 280 370 300 410 230 450 260 480 160 510 0 500z"/>
                                <path class="sand" d="M0 380L100 410 150 450 260 460 230 490 150 510 60 590 0 640z"/>
                                <path class="pale" d="M520 110L570 90 600 110 580 150 540 140zM520 30L560 20 570 60zM1380 110L1470 130 1480 195 1400 150z"/>
                                <path class="water" d="M185 260L180 300 125 338 165 305zM285 540L320 515 360 535 340 552 300 548z"/>
                                <path class="land" d="M380 1160L405 1170 420 1140 450 1130 495 1145 490 1180 540 1195 550 1140 562 1122 575 1170 600 1220 650 1260 685 1320 680 1370 650 1440 600 1465 550 1455 510 1410 480 1400 430 1370 350 1375 320 1400 265 1415 250 1380 232 1310 232 1260 280 1235 330 1220 340 1190z"/>
                                <path class="tan" d="M340 1190L380 1160 420 1140 495 1150 540 1200 590 1230 620 1290 620 1360 560 1400 500 1390 330 1350 250 1330 330 1225z"/>
                                <path class="sand" d="M235 1262L290 1237 340 1225 400 1190 450 1215 520 1210 550 1290 610 1340 620 1400 560 1425 510 1405 430 1365 350 1372 300 1390 255 1370 235 1310z"/>
                                <path class="green" d="M540 1445L600 1440 645 1390 680 1350 650 1440 600 1465zM550 1140L565 1125 580 1180 560 1170z"/>
                                <path class="border" d="M0 350L70 330 100 360 190 370 270 350 300 410 210 450 210 480 140 498 60 470 0 450M310 305L370 310 400 375 470 400M0 655L60 680 50 740 75 760M90 780L130 790 160 850 110 850M180 985L250 960 275 950M545 1400L600 1430 640 1440"/>
                                <path class="border dots" d="M155 30L190 90 195 190 260 160 350 170 400 220 370 270M600 150L610 80 700 60 710 100 790 110 800 60 860 80 920 120M360 310L330 450 390 480 440 440M150 510L200 560 180 620 120 640M200 500L240 520 260 620 310 600M60 600L100 640 110 700 170 730M240 650L230 740M408 1170V1375M510 1190V1270M544 1300V1420M544 1336H690"/>
                                <path class="dateline" d="M1115 20V40L990 155 875 310 988 400V1022H1218V982H1182V940H1260L1275 980 1340 1128M1287 1128V1094H1115L1088 1125 1090 1165 1072 1185 1075 1535"/>
                            </g>
                            <path class="equator" d="M0 337H1278"/>

                            <g class="oceans">
                                <text x="279" y="184">North</text><text x="279" y="202">Atlantic</text><text x="279" y="220">Ocean</text>
                                <text x="377" y="439">South</text><text x="377" y="457">Atlantic</text><text x="377" y="475">Ocean</text>
                                <text x="738" y="420">Indian</text><text x="738" y="438">Ocean</text>
                                <text x="1167" y="176">North</text><text x="1167" y="194">Pacific</text><text x="1167" y="212">Ocean</text>
                                <text x="1274" y="442">South</text><text x="1274" y="460">Pacific</text><text x="1274" y="478">Ocean</text>
                            </g>
                            <g class="countries">
                                <text x="38" y="93">Canada</text>
                                <text x="48" y="177">United States</text>
                                <text x="44" y="248">Mexico</text>
                                <text x="182" y="310">Venezuela</text>
                                <text x="144" y="327">Colombia</text>
                                <text x="221" y="374">Brazil</text>
                                <text x="144" y="384">Peru</text>
                                <text x="188" y="406">Bolivia</text>
                                <text x="166" y="447">Chile</text>
                                <text x="198" y="503">Argentina</text>
                                <text x="363" y="15">Iceland</text>
                                <text x="497" y="19">Sweden</text>
                                <text x="464" y="48">Norway</text>
                                <text x="418" y="78">United</text>
                                <text x="418" y="90">Kingdom</text>
                                <text x="503" y="104">Poland</text>
                                <text x="471" y="126">Germany</text>
                                <text x="555" y="124">Ukraine</text>
                                <text x="442" y="144">France</text>
                                <text x="479" y="159">Italy</text>
                                <text x="420" y="167">Spain</text>
                                <text x="567" y="182">Turkey</text>
                                <text x="596" y="208">Iraq</text>
                                <text x="639" y="215">Iran</text>
                                <text x="688" y="132">Kazakhstan</text>
                                <text x="691" y="203">Afghanistan</text>
                                <text x="693" y="227">Pakistan</text>
                                <text x="735" y="252">India</text>
                                <text x="440" y="231">Algeria</text>
                                <text x="499" y="235">Libya</text>
                                <text x="546" y="230">Egypt</text>
                                <text x="604" y="250">Saudi Arabia</text>
                                <text x="426" y="273">Mali</text>
                                <text x="471" y="273">Niger</text>
                                <text x="506" y="288">Chad</text>
                                <text x="548" y="276">Sudan</text>
                                <text x="464" y="305">Nigeria</text>
                                <text x="584" y="308">Ethiopia</text>
                                <text x="576" y="340">Kenya</text>
                                <text x="519" y="348">DRC</text>
                                <text x="573" y="366">Tanzania</text>
                                <text x="496" y="389">Angola</text>
                                <text x="492" y="416">Namibia</text>
                                <text x="525" y="432">Botswana</text>
                                <text x="615" y="424">Madagascar</text>
                                <text x="507" y="476">South Africa</text>
                                <text x="789" y="39">Russia</text>
                                <text x="823" y="140">Mongolia</text>
                                <text x="827" y="188">China</text>
                                <text x="965" y="181">Japan</text>
                                <text x="914" y="194">South Korea</text>
                                <text x="816" y="264">Thailand</text>
                                <text x="872" y="358">Indonesia</text>
                                <text x="991" y="361">Papua New</text>
                                <text x="991" y="371">Guinea</text>
                                <text x="942" y="440">Australia</text>
                                <text x="1065" y="503">New</text>
                                <text x="1065" y="515">Zealand</text>
                            </g>
                        </svg>

                        <div class="map-type">
                            <button type="button" class="active">Map</button>
                            <button type="button">Satellite</button>
                        </div>
                        <button type="button" class="map-button fullscreen" aria-label="Fullscreen">
                            <svg width="24" height="24" viewBox="0 0 24 24"><path fill="none" stroke="#666" stroke-width="3" d="M1.500 8V1.500H8M16 1.500h6.500V8M22.500 16v6.500H16M8 22.500H1.500V16"/></svg>
                        </button>
                        <button type="button" class="map-button pegman" aria-label="Street View">
                            <svg width="24" height="40" viewBox="0 0 24 40"><g fill="#fbbc2d" stroke="#806020" stroke-width="1"><path d="M7 13h10q3 0 4 4l2.500 10-3 1.500L18 23v16.500h-5V30h-2v9.500H6V23l-2.500 5.500-3-1.500L3 17q1-4 4-4z"/><circle cx="12" cy="7" r="6.500"/></g><path fill="#e07a1f" d="M8 14h8l-4 6z"/></svg>
                        </button>
                        <div class="zoom">
                            <button type="button" aria-label="Zoom in"><svg width="24" height="24" viewBox="0 0 24 24"><path fill="#666" d="M0 9.500h9.500V0h5v9.500H24v5h-9.500V24h-5v-9.500H0z"/></svg></button>
                            <button type="button" aria-label="Zoom out"><svg width="24" height="24" viewBox="0 0 24 24"><path fill="#666" d="M0 9.500h24v5H0z"/></svg></button>
                        </div>
                        <div class="google"><span class="g-blue">G</span><span class="g-red">o</span><span class="g-yellow">o</span><span class="g-blue">g</span><span class="g-green">l</span><span class="g-red">e</span></div>
                        <div class="credits"><span>Map data ©2021</span><a href="#">Terms of Use</a></div>
                    </div>
                </section>
            </main>
        </div>
    </div>
</body>
</html>
```

FILE: styles.css
```css
* {
    margin: 0;
    padding: 0;
    box-sizing: border-box;
}

body {
    font-family: "Noto Sans CJK SC", "Open Sans", sans-serif;
    font-size: 17px;
    line-height: 24px;
    color: #58666e;
    background: #eef2f4;
}

a {
    color: inherit;
    text-decoration: none;
}

button {
    font: inherit;
    color: inherit;
    border: none;
    background: none;
    cursor: pointer;
}

svg {
    display: block;
    fill: currentColor;
}

.app {
    display: grid;
    grid-template-columns: 267px minmax(0, 1fr);
    min-height: 100vh;
}

/* Sidebar */
.sidebar {
    background: #1d2a35;
    color: #869fb1;
    border-right: 1px solid #0c151d;
}

.brand {
    display: flex;
    align-items: center;
    gap: 7px;
    height: 77px;
    padding-left: 18px;
    color: #fff;
    font-size: 24px;
    font-weight: 500;
}

.brand-icon {
    width: 36px;
    height: 36px;
}

.menu {
    display: grid;
    grid-auto-rows: 1fr;
}

.menu-main {
    min-height: 547px;
    padding-bottom: 14px;
}

.menu-admin {
    min-height: 228px;
    padding-bottom: 15px;
}

.menu-account {
    min-height: 160px;
}

.menu a {
    display: grid;
    grid-template-columns: 40px 1fr 43px;
    column-gap: 13px;
    align-items: center;
    padding-left: 20px;
}

.menu .strong {
    font-weight: 700;
}

.menu-title {
    height: 58px;
    padding: 18px 20px 0;
    border-top: 3px solid #15202a;
    font-size: 14px;
    font-weight: 400;
    line-height: 26px;
    color: #506b80;
}

.icon {
    width: 20px;
    height: 20px;
    justify-self: center;
}

.icon.wide {
    width: 22px;
}

.icon.wider {
    width: 24px;
}

.arrow {
    width: 10px;
    height: 14px;
    fill: none;
    stroke: #607d92;
    stroke-width: 3;
}

.magenta { color: #ff1af0; }
.green-dark { color: #00a800; }
.blue { color: #0ab1fc; }
.silver { color: #bfc5c9; }
.amber { color: #ffc107; }
.yellow { color: #fad21a; }
.white { color: #fff; }
.cyan { color: #23b7e5; }

/* Top bars */
.topbar {
    display: flex;
    justify-content: space-between;
    height: 68px;
    background: #fff;
    border-bottom: 1px solid #dee5e7;
}

.tools {
    display: flex;
    align-items: center;
    gap: 39px;
    padding: 0 0 2px 42px;
}

.user {
    display: flex;
    align-items: center;
    width: 172px;
    padding: 0 20px 1px;
    background: #f1f1f1;
}

.caret {
    margin: 4px auto 0 7px;
    border: 5px solid transparent;
    border-top-color: #58666e;
    border-bottom: none;
}

.avatar {
    width: 54px;
    height: 54px;
}

.subbar {
    display: flex;
    align-items: center;
    justify-content: space-between;
    height: 68px;
    padding: 0 40px 2px;
    background: #f8f8f8;
    border-bottom: 1px solid #dee5e7;
    color: #777;
}

.slash {
    padding: 0 9px 0 6px;
    color: #ccc;
}

.current {
    color: #3a3f51;
}

.tabs {
    display: flex;
    gap: 40px;
}

.marked {
    outline: 3px solid #f00;
    outline-offset: 7px;
}

/* Dashboard widgets */
.content {
    padding: 27px 27px 11px 26px;
}

.columns {
    display: grid;
    grid-template-columns: 1fr 1fr;
    gap: 40px;
    align-items: start;
}

.widgets {
    display: grid;
    grid-template-columns: 1fr 1fr;
    gap: 27px;
}

.widget {
    position: relative;
    height: 121px;
    padding-top: 21px;
    background: #fff;
    border-radius: 2px;
    box-shadow: 0 1px 2px rgba(0, 0, 0, 0.1);
    text-align: center;
}

.value {
    margin-bottom: 4px;
    font-size: 44px;
    font-weight: 300;
    line-height: 48px;
}

.caption {
    font-size: 14px;
    line-height: 28px;
    color: #98a6ad;
}

.cyan-text {
    color: #16b4e4;
}

.corner {
    position: absolute;
    right: 14px;
    bottom: 5px;
    width: 24px;
    height: 19px;
    color: #98a6ad;
}

.corner.narrow {
    width: 20px;
}

.corner.slim {
    width: 16px;
}

.received {
    background: #217dbb;
    color: #fff;
}

.received .caption,
.received .corner {
    color: #8fbfe0;
}

.address {
    background: #23b7e5;
    color: #fff;
}

.address .caption,
.address .corner {
    color: #a8e0f2;
}

.state {
    background: #f05050;
    color: #fff;
}

.state .caption,
.state .corner {
    color: #f9e4e4;
}

.last {
    grid-column: 1 / 3;
    display: flex;
    height: 119px;
    padding-top: 0;
    background: #e4eaec;
    box-shadow: none;
}

.clock {
    display: flex;
    align-items: center;
    justify-content: center;
    width: 120px;
    background: #dce5e8;
}

.clock svg {
    width: 56px;
    height: 56px;
    fill: none;
    stroke: #0578b6;
    stroke-width: 5;
}

.last-text {
    flex: 1;
    padding-top: 20px;
    color: #1269a4;
}

/* Live chart */
.live {
    height: 416px;
    background: #fff;
    border-radius: 2px;
    box-shadow: 0 1px 2px rgba(0, 0, 0, 0.1);
}

.live-head {
    display: flex;
    justify-content: space-between;
    padding: 13px 0 0 21px;
}

.live-head h3 {
    font-size: 22px;
    font-weight: 100;
    line-height: 40px;
    color: #8594a0;
}

.switch {
    display: flex;
    align-items: center;
    width: 84px;
    height: 45px;
    padding-left: 13px;
    padding-bottom: 3px;
    border: 3px solid #f00;
}

.switch input {
    appearance: none;
    display: flex;
    justify-content: flex-end;
    width: 48px;
    height: 27px;
    padding: 1px;
    background: #27c24c;
    border-radius: 14px;
    cursor: pointer;
}

.switch input::before {
    content: "";
    width: 25px;
    height: 25px;
    background: #fff;
    border-radius: 50%;
    box-shadow: 1px 1px 3px rgba(0, 0, 0, 0.4);
}

.chart {
    display: grid;
    grid-template-columns: 26px 1fr;
    padding: 9px 32px 0 21px;
    font-size: 13px;
    line-height: 20px;
    color: #a5afb5;
}

.y-axis {
    display: flex;
    flex-direction: column;
    justify-content: space-between;
    height: 314px;
}

.plot {
    display: grid;
    grid-template-columns: repeat(4, 1fr);
    grid-template-rows: repeat(5, 1fr);
    margin: 10px 0;
    border: 1px solid #f5f5f7;
    border-width: 0 1px 1px 0;
}

.plot i {
    border: 1px solid #f5f5f7;
    border-width: 1px 0 0 1px;
}

.x-axis {
    grid-column: 2;
    display: flex;
    justify-content: space-between;
    margin: -5px -15px 0;
}

.x-axis span {
    width: 30px;
    text-align: center;
}

/* Device location */
.location {
    margin-top: 27px;
    border: 1px solid #dee5e7;
    background: #f6f8f8;
}

.location h3 {
    display: flex;
    align-items: center;
    gap: 5px;
    height: 61px;
    padding: 0 20px 9px;
    font-size: 17px;
    font-weight: 400;
    color: #222;
}

.info {
    width: 18px;
    height: 18px;
    color: #98a6ad;
}

.map {
    position: relative;
    height: 520px;
    overflow: hidden;
    background: #aadaff;
    font-family: Roboto, "Liberation Sans", sans-serif;
}

.world {
    width: 100%;
    height: 100%;
}

.land { fill: #e2ebcf; }
.pale { fill: #ebebe3; }
.ice { fill: #f6f7f9; }
.green { fill: #c9e5bf; }
.icon.green { fill: #27c24c; }
.forest { fill: #b7d7b4; }
.tan { fill: #f0ead0; }
.sand { fill: #f9f6e8; }
.water { fill: #aadaff; }

.border {
    fill: none;
    stroke: #9aa19a;
    stroke-opacity: 0.6;
    stroke-width: 2;
}

.dots {
    stroke-dasharray: 6 6;
}

.dateline,
.equator {
    fill: none;
    stroke: #a58ea8;
    stroke-width: 2;
    stroke-dasharray: 8 3;
}

.dateline {
    stroke-width: 5;
    stroke-dasharray: 20 9;
}

.countries {
    font-size: 12px;
    font-weight: 500;
    text-anchor: middle;
    fill: #3c3c3c;
    stroke: #fff;
    stroke-opacity: 0.8;
    stroke-width: 3;
    stroke-linejoin: round;
    paint-order: stroke;
}

.oceans {
    font-size: 16px;
    letter-spacing: 2px;
    text-anchor: middle;
    fill: #5b8fd0;
}

.map-type {
    position: absolute;
    top: 13px;
    left: 14px;
    display: flex;
    background: #fff;
    border-radius: 2px;
    box-shadow: 0 1px 4px rgba(0, 0, 0, 0.3);
    font-size: 24px;
    line-height: 54px;
}

.map-type button {
    padding: 0 30px;
    color: #565656;
}

.map-type .active {
    border-right: 1px solid #e6e6e6;
    font-weight: 500;
    color: #000;
}

.map-button,
.zoom {
    position: absolute;
    right: 13px;
    display: flex;
    align-items: center;
    justify-content: center;
    width: 54px;
    height: 54px;
    background: #fff;
    border-radius: 2px;
    box-shadow: 0 1px 4px rgba(0, 0, 0, 0.3);
}

.fullscreen {
    top: 13px;
}

.pegman {
    bottom: 183px;
}

.zoom {
    bottom: 32px;
    flex-direction: column;
    height: 108px;
}

.zoom button {
    display: flex;
    flex: 1;
    align-items: center;
    justify-content: center;
    width: 40px;
}

.zoom button + button {
    border-top: 1px solid #e6e6e6;
}

.google {
    position: absolute;
    bottom: 4px;
    left: 9px;
    font-family: Lato, sans-serif;
    font-size: 26px;
    font-weight: 500;
    line-height: 32px;
    -webkit-text-stroke: 3px #fff;
    paint-order: stroke fill;
}

.g-blue { color: #4285f4; }
.g-red { color: #ea4335; }
.g-yellow { color: #fbbc05; }
.g-green { color: #34a853; }

.credits {
    position: absolute;
    right: 0;
    bottom: 0;
    display: flex;
    gap: 2px;
    font-size: 13px;
    line-height: 18px;
    color: #222;
}

.credits span,
.credits a {
    padding: 0 8px;
    background: rgba(235, 241, 245, 0.75);
}
```
